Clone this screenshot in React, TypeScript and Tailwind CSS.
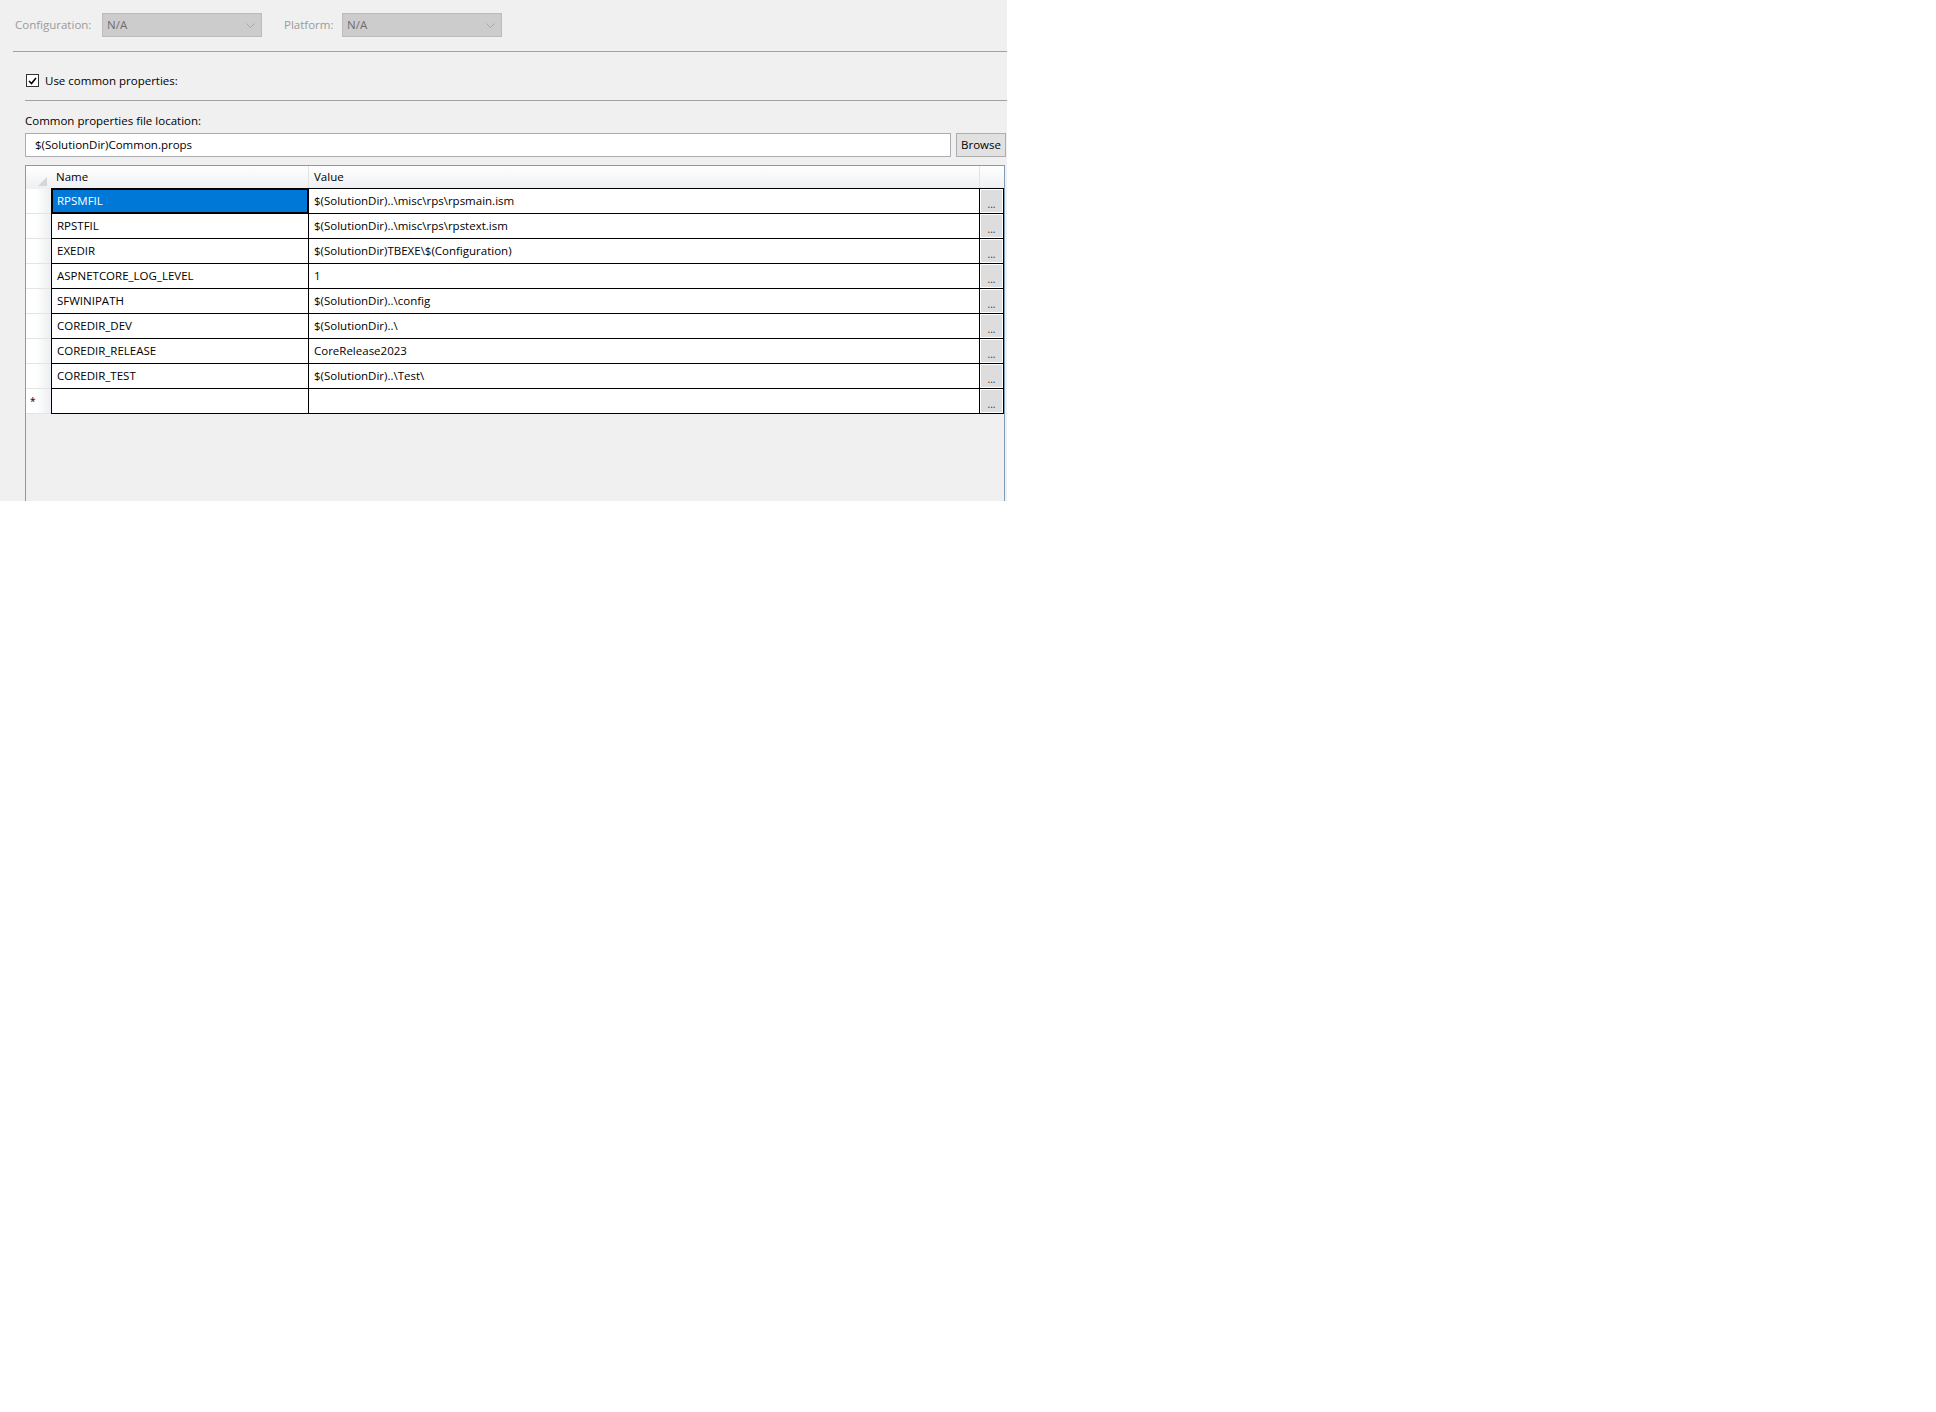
import React from "react";

const rows: [string, string][] = [
  ["RPSMFIL", "$(SolutionDir)..\\misc\\rps\\rpsmain.ism"],
  ["RPSTFIL", "$(SolutionDir)..\\misc\\rps\\rpstext.ism"],
  ["EXEDIR", "$(SolutionDir)TBEXE\\$(Configuration)"],
  ["ASPNETCORE_LOG_LEVEL", "1"],
  ["SFWINIPATH", "$(SolutionDir)..\\config"],
  ["COREDIR_DEV", "$(SolutionDir)..\\"],
  ["COREDIR_RELEASE", "CoreRelease2023"],
  ["COREDIR_TEST", "$(SolutionDir)..\\Test\\"],
];

function Dropdown() {
  return (
    <div className="flex h-[24px] w-[160px] items-center justify-between border border-[#bcbcbc] bg-[#cccccc] pl-[4px] pr-[6px] text-[#6d6d6d]">
      <span>N/A</span>
      <svg width="9" height="5" viewBox="0 0 9 5" fill="none">
        <path d="M0.5 0.5 L4.5 4.5 L8.5 0.5" stroke="#a6a6a6" strokeWidth="1" />
      </svg>
    </div>
  );
}

function EllipsisButton() {
  return (
    <div className="flex h-full w-[23px] items-end justify-center border border-white bg-[#dddddd] pb-[3px] text-[10px] leading-none text-[#333]">
      ...
    </div>
  );
}

export default function App() {
  return (
    <div
      className="min-h-screen bg-white text-[11.5px] text-black"
      style={{ fontFamily: '"Open Sans", "Noto Sans", sans-serif' }}
    >
      <div className="flex h-[501px] w-[1007px] flex-col bg-[#f0f0f0] pt-[13px]">
        {/* Configuration / Platform */}
        <div className="flex h-[24px] items-center">
          <div className="w-[102px] pl-[15px] text-[#9a9a9a]">Configuration:</div>
          <Dropdown />
          <div className="ml-[22px] w-[58px] text-[#9a9a9a]">Platform:</div>
          <Dropdown />
        </div>

        <div className="ml-[13px] mt-[14px] h-px bg-[#a0a0a0]" />

        {/* Use common properties */}
        <div className="ml-[26px] mt-[22px] flex h-[13px] items-center gap-[6px]">
          <div className="flex h-[13px] w-[13px] items-center justify-center border border-[#333] bg-white">
            <svg width="9" height="8" viewBox="0 0 9 8" fill="none">
              <path d="M1 4 L3.5 6.5 L8 1" stroke="#000" strokeWidth="1.6" />
            </svg>
          </div>
          <span>Use common properties:</span>
        </div>

        <div className="ml-[25px] mt-[13px] h-px bg-[#a0a0a0]" />

        <div className="ml-[25px] mt-[12px] h-[16px] leading-[16px]">
          Common properties file location:
        </div>

        <div className="ml-[25px] mt-[4px] flex h-[24px] items-center">
          <div className="flex h-full w-[926px] items-center border border-[#abadb3] bg-white pl-[9px]">
            $(SolutionDir)Common.props
          </div>
          <div className="ml-[5px] flex h-full w-[50px] items-center justify-center border border-[#adadad] bg-[#e1e1e1]">
            Browse
          </div>
        </div>

        {/* Grid */}
        <div className="ml-[25px] mt-[8px] flex min-h-0 w-[980px] flex-1 flex-col border-x border-t border-[#7f9db9]">
          <div className="flex h-[22px] bg-gradient-to-b from-white to-[#eef0f3]">
            <div className="flex w-[25px] items-end justify-end pb-[2px] pr-[4px]">
              <svg width="9" height="9" viewBox="0 0 9 9">
                <path d="M9 0 L9 9 L0 9 Z" fill="#d6d6d6" />
              </svg>
            </div>
            <div className="flex w-[258px] items-center border-r border-[#e2e3e5] pl-[5px]">Name</div>
            <div className="flex w-[671px] items-center border-r border-[#e2e3e5] pl-[5px]">Value</div>
            <div className="w-[24px]" />
          </div>

          <div className="flex">
            <div className="flex w-[25px] flex-col">
              <div className="h-px" />
              {[...rows, ["", ""]].map((_, i) => (
                <div
                  key={i}
                  className="flex h-[25px] items-center border-b border-[#e4e4e4] bg-gradient-to-r from-white from-40% to-[#eceef1] pl-[4px] text-[10px]"
                >
                  {i === rows.length ? "*" : ""}
                </div>
              ))}
            </div>

            <div className="flex w-[953px] flex-col border-l border-t border-black">
              {[...rows, ["", ""] as [string, string]].map(([name, value], i) => (
                <div key={i} className="flex h-[25px] border-b border-black bg-white">
                  <div
                    className={
                      i === 0
                        ? "flex w-[257px] items-center border-r border-black bg-[#0078d7] pl-[5px] text-white shadow-[inset_0_0_0_1px_#000]"
                        : "flex w-[257px] items-center border-r border-black pl-[5px]"
                    }
                  >
                    {name}
                  </div>
                  <div className="flex w-[671px] items-center border-r border-black pl-[5px]">
                    {value}
                  </div>
                  <div className="w-[24px] border-r border-black">
                    <EllipsisButton />
                  </div>
                </div>
              ))}
            </div>
          </div>
        </div>
      </div>
    </div>
  );
}
